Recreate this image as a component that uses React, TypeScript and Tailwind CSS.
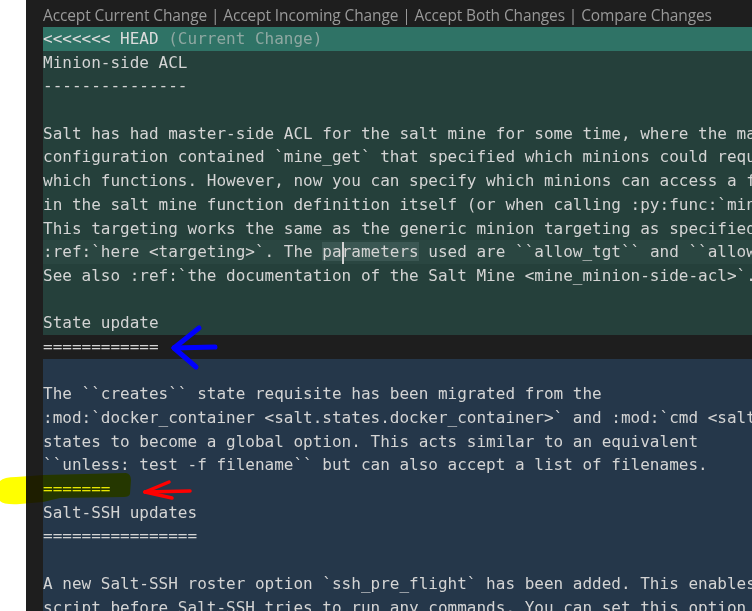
import React from 'react';

type Zone = 'head' | 'cur' | 'line' | 'sep' | 'inc';

const rowBg: Record<Zone, string> = {
  head: 'bg-[#2f7366]',
  cur: 'bg-[#25403b]',
  line: 'bg-[#2a4641]',
  sep: 'bg-[#1e1e1e]',
  inc: 'bg-[#25374a]',
};

const lines: Array<{ zone: Zone; text?: string; kind?: string }> = [
  { zone: 'head', kind: 'head' },
  { zone: 'cur', text: 'Minion-side ACL' },
  { zone: 'cur', text: '---------------' },
  { zone: 'cur', text: '' },
  { zone: 'cur', text: 'Salt has had master-side ACL for the salt mine for some time, where the master' },
  { zone: 'cur', text: 'configuration contained `mine_get` that specified which minions could request' },
  { zone: 'cur', text: 'which functions. However, now you can specify which minions can access a function' },
  { zone: 'cur', text: 'in the salt mine function definition itself (or when calling :py:func:`mine.send' },
  { zone: 'cur', text: 'This targeting works the same as the generic minion targeting as specified' },
  { zone: 'line', kind: 'cursor' },
  { zone: 'cur', text: 'See also :ref:`the documentation of the Salt Mine <mine_minion-side-acl>`.' },
  { zone: 'cur', text: '' },
  { zone: 'cur', text: 'State update' },
  { zone: 'sep', text: '============' },
  { zone: 'inc', text: '' },
  { zone: 'inc', text: 'The ``creates`` state requisite has been migrated from the' },
  { zone: 'inc', text: ':mod:`docker_container <salt.states.docker_container>` and :mod:`cmd <salt.states.cmd>`' },
  { zone: 'inc', text: 'states to become a global option. This acts similar to an equivalent' },
  { zone: 'inc', text: '``unless: test -f filename`` but can also accept a list of filenames.' },
  { zone: 'inc', kind: 'marker' },
  { zone: 'inc', text: 'Salt-SSH updates' },
  { zone: 'inc', text: '================' },
  { zone: 'inc', text: '' },
  { zone: 'inc', text: 'A new Salt-SSH roster option `ssh_pre_flight` has been added. This enables' },
  { zone: 'inc', text: 'script before Salt-SSH tries to run any commands. You can set this option' },
];

const LineText: React.FC<{ kind?: string; text?: string }> = ({ kind, text }) => {
  if (kind === 'head') {
    return (
      <>
        <span className="text-[#dcdcdc]">{'<<<<<<< HEAD'}</span>
        <span className="text-[#8fa8a2]"> (Current Change)</span>
      </>
    );
  }
  if (kind === 'cursor') {
    return (
      <>
        {':ref:`here <targeting>`. The '}
        <span className="relative bg-[#3b5753]">
          pa
          <span className="absolute top-0 h-[23.7px] w-[2px] bg-[#d4d4d4]" />
          rameters
        </span>
        {' used are ``allow_tgt`` and ``allow_tgt_type``.'}
      </>
    );
  }
  if (kind === 'marker') {
    return <span className="text-[#e8e84a]">=======</span>;
  }
  return <>{text}</>;
};

const App: React.FC = () => {
  return (
    <div className="relative flex w-[752px] h-[611px] overflow-hidden bg-white">
      <div className="w-[26px] shrink-0 bg-white" />
      <div className="flex flex-col flex-1 bg-[#1e1e1e] overflow-hidden">
        {/* codelens */}
        <div className="h-[27px] shrink-0 pl-[17px] pt-[5px] whitespace-nowrap text-[15.5px] leading-[20px] text-[#999999] font-['Open_Sans',sans-serif] tracking-[-0.12px]">
          Accept Current Change | Accept Incoming Change | Accept Both Changes | Compare Changes
        </div>
        {lines.map((l, i) => (
          <div key={i} className="flex h-[23.7px] shrink-0">
            <div className="w-[17px] shrink-0 bg-[#1e1e1e]" />
            <div
              className={`flex-1 overflow-hidden whitespace-pre text-[16px] leading-[23.7px] text-[#d4d4d4] font-['DejaVu_Sans_Mono',monospace] ${rowBg[l.zone]}`}
            >
              <LineText kind={l.kind} text={l.text} />
            </div>
          </div>
        ))}
      </div>

      {/* yellow highlighter */}
      <svg
        className="absolute left-0 top-0 pointer-events-none mix-blend-multiply"
        width="752"
        height="611"
      >
        <path
          d="M0,481 Q4,477 16,477 L30,476 L43,475 L126,473 Q131,474 131,480 L130,494 Q129,497 124,497 L60,498 L43,502 L20,504 Q4,505 0,501 Z"
          fill="#ffff00"
        />
      </svg>

      {/* arrows */}
      <svg className="absolute left-0 top-0 pointer-events-none" width="752" height="611">
        <g stroke="#0000ff" strokeWidth="5" strokeLinecap="round" fill="none">
          <path d="M174,348 L215,347" />
          <path d="M174,348 L199,328" />
          <path d="M174,348 L196,367" />
        </g>
        <g stroke="#ff0000" strokeWidth="3.5" strokeLinecap="round" fill="none">
          <path d="M145,492 L190,491" />
          <path d="M145,492 L169,482" />
          <path d="M145,492 L172,498" />
        </g>
      </svg>
    </div>
  );
};

export default App;
